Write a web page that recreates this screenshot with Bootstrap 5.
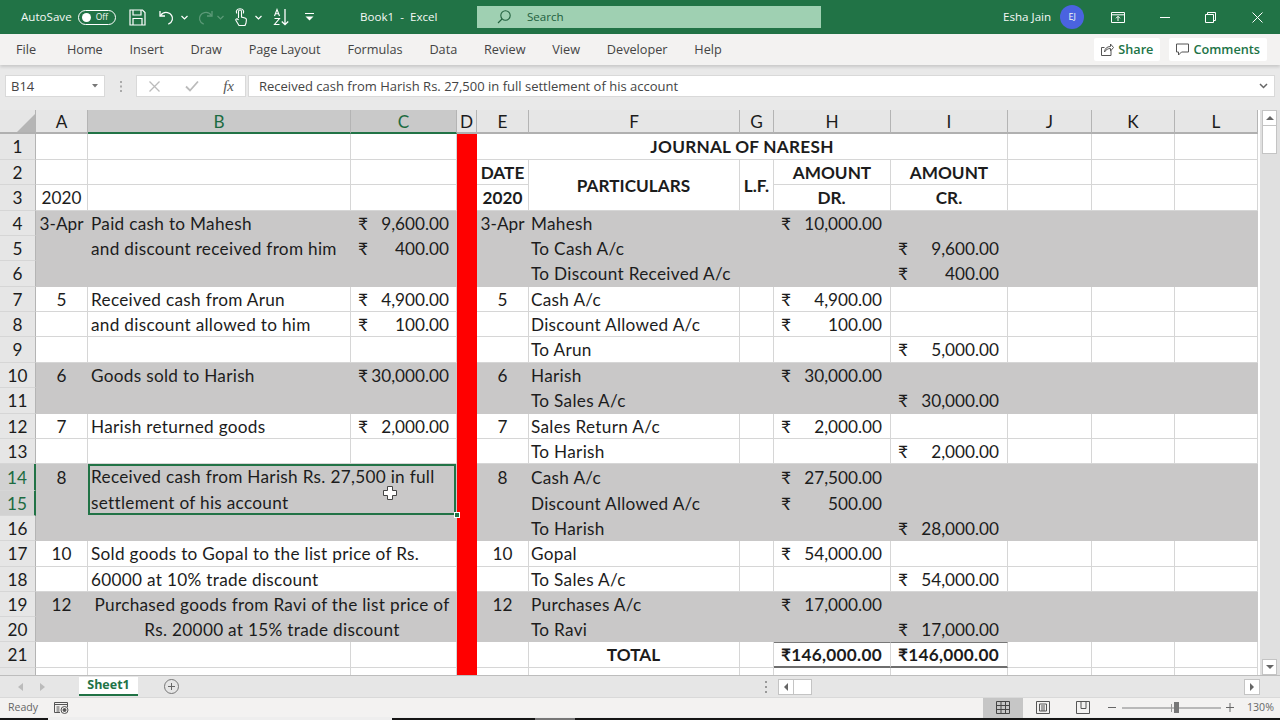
<!DOCTYPE html>
<html lang="en">
<head>
  <meta charset="UTF-8">
  <meta name="viewport" content="width=device-width, initial-scale=1.0">
  <title>Book1 - Excel</title>
  <link href="https://cdn.jsdelivr.net/npm/bootstrap@5.3.0/dist/css/bootstrap.min.css" rel="stylesheet">
  <style>
    html, body { height: 720px; overflow: hidden; }
    body { font-family: "Open Sans", "Noto Sans", sans-serif; background: #f3f2f1; color: #333; }
    svg { display: block; flex: none; }

    /* title bar */
    .title-strip { height: 34px; background: #217346; color: #f4f8f5; font-size: 11.6px; }
    .qat { width: 470px; padding-left: 21px; }
    .onoff { width: 38px; height: 15px; border: 1px solid #fff; border-radius: 8px; margin-left: 6px; padding: 0 3px; font-size: 8.5px; gap: 5px; }
    .onoff i { width: 9px; height: 9px; border-radius: 50%; background: #fff; display: block; }
    .doc-name { width: 117px; margin-left: -110px; }
    .search-box { width: 344px; height: 22px; background: #9fd0b2; color: #22603e; padding-left: 20px; gap: 16px; margin-top: -1px; }
    .user-name { margin-left: 182px; }
    .avatar { width: 24px; height: 24px; border-radius: 50%; background: #4a63e0; font-size: 9px; margin-left: 9px; margin-right: 27px; }

    /* ribbon tabs */
    .tab-strip { height: 31px; padding-left: 16px; font-size: 12.7px; color: #444; gap: 26.8px; box-shadow: 0 2px 3px rgba(0,0,0,.14); position: relative; z-index: 2; }
    .tab-file { margin-right: 4px; }
    .rbtn-group { gap: 9px; margin-right: 13px; }
    .rbtn { height: 23px; background: #fff; color: #217346; font-weight: 600; font-size: 12.7px; gap: 4px; padding: 0 7px; border-radius: 2px; }

    /* formula bar */
    .formula-strip { height: 45px; background: #e9e9e9; padding: 10px 5px 13px 5px; font-size: 13px; color: #444; }
    .fbox { background: #fff; border: 1px solid #d9d9d9; height: 22px; }
    .fbox span { padding-top: 1px; }
    .name-box { width: 100px; padding: 0 6px 0 5px; }
    .fdots { width: 31px; }
    .fx-box { width: 110px; margin-right: 2px; padding: 0 11px; }
    .fx-box em { font-family: "Liberation Serif", serif; font-size: 15px; color: #555; }
    .input-box { flex: 1; padding: 0 6px 0 10px; }

    /* sheet */
    .sheet-wrap { height: 565px; background: #e0e0e0; }
    .sheet-view { width: 1260px; height: 565px; overflow: hidden; position: relative; background: #fff; }
    .sheet-grid { width: 1258px; table-layout: fixed; border-collapse: separate; border-spacing: 0; font-family: Lato, "Noto Sans", sans-serif; font-size: 17.2px; color: #1c1c1c; background: #fff; }
    .sheet-grid td, .sheet-grid th { height: 25px; padding: 1px 3px 0; border-right: 1px solid #d6d6d6; border-bottom: 1px solid #d6d6d6; line-height: 1; white-space: nowrap; font-weight: 400; overflow: hidden; letter-spacing: .3px; }
    .sheet-grid tr.tall td, .sheet-grid tr.tall th { height: 26px; }
    .sheet-grid th { letter-spacing: 0; }
    .sheet-grid .hcol th { height: 24px; padding-top: 1px; background: #e6e6e6; text-align: center; border-right-color: #b4b4b4; border-bottom: 2px solid #b0b0b0; }
    .sheet-grid .hcol .sel-h { background: #c9c9c9; color: #1c6b41; border-bottom-color: #217346; }
    .sheet-grid .hrow { background: #e6e6e6; text-align: center; border-right-color: #b4b4b4; }
    .sheet-grid .sel-r { background: #d2d2d2; color: #1c6b41; border-right: 2px solid #217346; }
    .corner-tri { width: 0; height: 0; border-style: solid; border-width: 0 0 18px 18px; border-color: transparent transparent #b5b5b5 transparent; margin: 3px 0 0 14px; }
    .sheet-grid td.ctr { text-align: center; letter-spacing: 0; }
    .sheet-grid td.ctr-w { text-align: center; }
    .sheet-grid td.ctr-b { text-align: center; font-weight: 700; letter-spacing: 0; }
    .sheet-grid td.sheet-title { letter-spacing: .25px; }
    .sheet-grid td.amt { padding-left: 7px; padding-right: 8px; letter-spacing: 0; }
    .sheet-grid td.amt:nth-child(4) { padding-right: 7px; }
    .sheet-grid td.amt > div { display: flex; justify-content: space-between; }
    .sheet-grid .red-col + td + td { padding-left: 2px; }
    .sheet-grid tr.gy td:not(.red-col) { background: #c9c8c8; border-color: #c9c8c8; }
    .sheet-grid td.red-col { background: #f00; border-color: #f00; }
    .sheet-grid td.tot { font-weight: 700; letter-spacing: .3px; border-top: 1px solid #777; border-bottom: 2px solid #6e6e6e; }
    .sheet-grid td.tot > div { justify-content: flex-end; }
    .sheet-grid tr.last-row td, .sheet-grid tr.last-row th { height: 10px; padding: 0; }
    .sheet-grid td.sel-cell { vertical-align: top; padding-top: 0; line-height: 25.5px; white-space: normal; box-shadow: inset 0 0 0 2px #217346; overflow: visible; }
    .fill-handle { position: absolute; left: 454px; top: 402px; width: 4px; height: 4px; background: #217346; border: 1px solid #fff; box-sizing: content-box; }
    .cell-cursor { position: absolute; left: 382px; top: 375px; }

    /* scrollbars */
    .vscroll { width: 20px; padding: 0 3px 0 2px; }
    .sbtn { background: #fff; border: 1px solid #c4c4c4; }
    .vscroll .sbtn { width: 15px; height: 16px; }
    .vthumb { width: 15px; height: 28px; background: #fff; border: 1px solid #c4c4c4; border-top: 0; }

    /* sheet tabs */
    .sheet-tabs { height: 22px; background: #e6e6e6; border-top: 1px solid #bdbdbd; }
    .tab-nav { width: 79px; padding-left: 18px; gap: 17px; }
    .sheet1 { width: 59px; height: 19px; background: #fff; color: #217346; font-weight: 700; font-size: 12.5px; border-bottom: 2px solid #217346; margin-top: -1px; }
    .add-sheet { width: 15px; height: 15px; border: 1px solid #777; border-radius: 50%; margin-left: 26px; }
    .hscroll { margin-left: auto; padding-right: 20px; }
    .hdots { margin-right: 11px; }
    .hscroll .sbtn { height: 16px; width: 16px; }
    .hthumb { width: 18px; height: 16px; background: #fff; border: 1px solid #c4c4c4; border-left: 0; }
    .htrack { width: 432px; }

    /* status bar */
    .status-strip { height: 20px; background: #f3f2f1; border-top: 1px solid #d9d9d9; font-size: 10.6px; color: #666; padding-left: 8px; }
    .view-btn { width: 40px; height: 20px; }
    .view-on { background: #c6c6c6; }
    .zoom-minus { margin-left: 5px; }
    .zoom-track { width: 99px; height: 2px; background: #b9b9b9; position: relative; margin: 0 5px 0 6px; }
    .zoom-thumb { position: absolute; left: 52px; top: -5px; width: 5px; height: 11px; background: #777; }
    .zoom-tick { position: absolute; left: 49px; top: -3px; width: 1px; height: 8px; background: #999; }
    .zoom-pct { width: 46px; padding-left: 13px; }
    .bottom-edge { height: 3px; background: #eee; }
    .bottom-edge i { display: block; height: 2px; margin-top: 1px; background: #151515; }
  </style>
</head>
<body>

  <!-- title bar -->
  <div class="title-strip d-flex align-items-center">
    <div class="qat d-flex align-items-center">
      <span>AutoSave</span>
      <div class="onoff d-flex align-items-center"><i></i><span>Off</span></div>
      <svg style="margin-left:13px" width="17" height="17" viewBox="0 0 17 17" fill="none" stroke="#fff" stroke-width="1.2"><path d="M1 1h12.500L16 3.500V16H1z"/><path d="M4 1v5h8V1M4 16V9.500h9V16"/></svg>
      <svg style="margin-left:13px" width="16" height="15" viewBox="0 0 16 15" fill="none" stroke="#fff" stroke-width="1.3"><path d="M1 1v5h5"/><path d="M1.300 5.800C3 3.200 5.600 2 8.500 2.600c3.500.7 5.700 4 4.800 7.300-.5 2-2 3.500-4 4.300"/></svg>
      <svg style="margin-left:6px" width="7" height="5" viewBox="0 0 7 5" fill="none" stroke="#fff" stroke-width="1.2"><path d="M.5 1 3.500 4l3-3"/></svg>
      <svg style="margin-left:9px" width="16" height="15" viewBox="0 0 16 15" fill="none" stroke="#5c9a78" stroke-width="1.3"><path d="M15 1v5h-5"/><path d="M14.700 5.800C13 3.200 10.400 2 7.500 2.600c-3.500.7-5.700 4-4.800 7.300.5 2 2 3.500 4 4.300"/></svg>
      <svg style="margin-left:4px" width="7" height="5" viewBox="0 0 7 5" fill="none" stroke="#5c9a78" stroke-width="1.2"><path d="M.5 1 3.500 4l3-3"/></svg>
      <svg style="margin-left:10px" width="13" height="18" viewBox="0 0 13 18" fill="none" stroke="#fff" stroke-width="1.1"><path d="M4.500 10V3.500a1.500 1.500 0 0 1 3 0V9l3.500 1c1 .3 1.500 1 1.400 2l-.4 3-1 2.500H5L2 12.500c-.6-1 .5-2.200 1.500-1.500l1 1"/><path d="M2.800 5.500C1.500 3.200 3 .8 6 .8s4.500 2.400 3.200 4.700"/></svg>
      <svg style="margin-left:8px" width="7" height="5" viewBox="0 0 7 5" fill="none" stroke="#fff" stroke-width="1.2"><path d="M.5 1 3.500 4l3-3"/></svg>
      <svg style="margin-left:11px" width="17" height="18" viewBox="0 0 17 18" fill="none" stroke="#fff" stroke-width="1.100"><path d="M1.500 8 4 1.500 6.500 8M2.400 5.800h3.200M1.500 10.500h5L1.500 16.500h5"/><path d="M12 1v15.500M8.800 13.500l3.200 3.200 3.200-3.200" stroke-width="1.300"/></svg>
      <svg style="margin-left:15px" width="9" height="8" viewBox="0 0 9 8" fill="#fff"><path d="M0 0h9v1.100H0zM.5 3.500h8L4.500 7.500z"/></svg>
    </div>
    <div class="doc-name text-nowrap">Book1&nbsp; -&nbsp; Excel</div>
    <div class="search-box d-flex align-items-center">
      <svg width="14" height="14" viewBox="0 0 14 14" fill="none" stroke="#22603e" stroke-width="1.100"><circle cx="8.500" cy="5.500" r="4.700"/><path d="M5 9 1 13"/></svg>
      <span>Search</span>
    </div>
    <span class="user-name">Esha Jain</span>
    <div class="avatar d-flex align-items-center justify-content-center">EJ</div>
    <svg width="14" height="11" viewBox="0 0 14 11" fill="none" stroke="#fff" stroke-width="1"><path d="M.5.500h13v10H.5zM.5 2.800h13"/><path d="M7 9V4.500M5 6.300l2-2 2 2"/></svg>
    <svg style="margin-left:35px" width="10" height="1"><rect width="10" height="1" fill="#fff"/></svg>
    <svg style="margin-left:35px" width="11" height="11" viewBox="0 0 11 11" fill="none" stroke="#fff" stroke-width="1"><path d="M.5 2.500h8v8h-8zM2.500 2.500v-2h8v8h-2"/></svg>
    <svg style="margin-left:36px" width="11" height="11" viewBox="0 0 11 11" fill="none" stroke="#fff" stroke-width="1"><path d="M.5.500l10 10M10.500.500l-10 10"/></svg>
  </div>

  <!-- ribbon tabs -->
  <div class="tab-strip d-flex align-items-center">
    <span class="tab-file">File</span><span>Home</span><span>Insert</span><span>Draw</span><span>Page Layout</span><span>Formulas</span><span>Data</span><span>Review</span><span>View</span><span>Developer</span><span>Help</span>
    <div class="rbtn-group ms-auto d-flex align-items-center">
      <div class="rbtn d-flex align-items-center">
        <svg width="13" height="13" viewBox="0 0 13 13" fill="none" stroke="#555" stroke-width="1"><path d="M10 7.500v5H.5v-8h3"/><path d="M3.500 9c.3-3.500 2.500-5.500 6-5.500V1l3 3.500-3 3.500V5.500C7 5.500 5 6.500 3.500 9z"/></svg>
        <span>Share</span>
      </div>
      <div class="rbtn d-flex align-items-center">
        <svg width="13" height="13" viewBox="0 0 13 13" fill="none" stroke="#555" stroke-width="1"><path d="M.5 1h12v8h-7l-3 3V9h-2z"/></svg>
        <span>Comments</span>
      </div>
    </div>
  </div>

  <!-- formula bar -->
  <div class="formula-strip d-flex">
    <div class="fbox name-box d-flex align-items-center justify-content-between">
      <span>B14</span>
      <svg width="6" height="4" viewBox="0 0 6 4" fill="#777"><path d="M0 0h6L3 3.500z"/></svg>
    </div>
    <div class="fdots d-flex align-items-center justify-content-center">
      <svg width="2" height="11" viewBox="0 0 2 11" fill="#aaa"><rect width="2" height="2"/><rect y="4.500" width="2" height="2"/><rect y="9" width="2" height="2"/></svg>
    </div>
    <div class="fbox fx-box d-flex align-items-center justify-content-between">
      <svg width="13" height="13" viewBox="0 0 13 13" fill="none" stroke="#bbb" stroke-width="1.300"><path d="M1.500 1.500l10 10M11.500 1.500l-10 10"/></svg>
      <svg width="14" height="12" viewBox="0 0 14 12" fill="none" stroke="#bbb" stroke-width="1.800"><path d="M1 6.500l4 4 8-9"/></svg>
      <em>fx</em>
    </div>
    <div class="fbox input-box d-flex align-items-center justify-content-between">
      <span>Received cash from Harish Rs. 27,500 in full settlement of his account</span>
      <svg width="9" height="6" viewBox="0 0 9 6" fill="none" stroke="#666" stroke-width="1.500"><path d="M1 1l3.500 3.500L8 1"/></svg>
    </div>
  </div>

  <!-- sheet -->
  <div class="sheet-wrap d-flex">
    <div class="sheet-view">
      <table class="sheet-grid">
        <colgroup>
          <col style="width:36px"><col style="width:52px"><col style="width:263px"><col style="width:106px"><col style="width:20px"><col style="width:52px"><col style="width:211px"><col style="width:34px"><col style="width:117px"><col style="width:117px"><col style="width:84px"><col style="width:83px"><col style="width:83px">
        </colgroup>
        <tr class="hcol"><th><div class="corner-tri"></div></th><th>A</th><th class="sel-h">B</th><th class="sel-h">C</th><th>D</th><th>E</th><th>F</th><th>G</th><th>H</th><th>I</th><th>J</th><th>K</th><th>L</th></tr>
        <tr class="tall"><th class="hrow">1</th><td></td><td></td><td></td><td class="red-col"></td><td class="ctr-b sheet-title" colspan="5">JOURNAL OF NARESH</td><td></td><td></td><td></td></tr>
        <tr><th class="hrow">2</th><td></td><td></td><td></td><td class="red-col"></td><td class="ctr-b">DATE</td><td class="ctr-b" rowspan="2">PARTICULARS</td><td class="ctr-b" rowspan="2">L.F.</td><td class="ctr-b">AMOUNT</td><td class="ctr-b">AMOUNT</td><td></td><td></td><td></td></tr>
        <tr class="tall"><th class="hrow">3</th><td class="ctr">2020</td><td></td><td></td><td class="red-col"></td><td class="ctr-b">2020</td><td class="ctr-b">DR.</td><td class="ctr-b">CR.</td><td></td><td></td><td></td></tr>
        <tr class="gy"><th class="hrow">4</th><td class="ctr">3-Apr</td><td>Paid cash to Mahesh</td><td class="amt"><div><span>₹</span><span>9,600.00</span></div></td><td class="red-col"></td><td class="ctr">3-Apr</td><td>Mahesh</td><td></td><td class="amt"><div><span>₹</span><span>10,000.00</span></div></td><td></td><td></td><td></td><td></td></tr>
        <tr class="gy"><th class="hrow">5</th><td></td><td>and discount received from him</td><td class="amt"><div><span>₹</span><span>400.00</span></div></td><td class="red-col"></td><td></td><td>To Cash A/c</td><td></td><td></td><td class="amt"><div><span>₹</span><span>9,600.00</span></div></td><td></td><td></td><td></td></tr>
        <tr class="gy tall"><th class="hrow">6</th><td></td><td></td><td></td><td class="red-col"></td><td></td><td>To Discount Received A/c</td><td></td><td></td><td class="amt"><div><span>₹</span><span>400.00</span></div></td><td></td><td></td><td></td></tr>
        <tr><th class="hrow">7</th><td class="ctr">5</td><td>Received cash from Arun</td><td class="amt"><div><span>₹</span><span>4,900.00</span></div></td><td class="red-col"></td><td class="ctr">5</td><td>Cash A/c</td><td></td><td class="amt"><div><span>₹</span><span>4,900.00</span></div></td><td></td><td></td><td></td><td></td></tr>
        <tr><th class="hrow">8</th><td></td><td>and discount allowed to him</td><td class="amt"><div><span>₹</span><span>100.00</span></div></td><td class="red-col"></td><td></td><td>Discount Allowed A/c</td><td></td><td class="amt"><div><span>₹</span><span>100.00</span></div></td><td></td><td></td><td></td><td></td></tr>
        <tr class="tall"><th class="hrow">9</th><td></td><td></td><td></td><td class="red-col"></td><td></td><td>To Arun</td><td></td><td></td><td class="amt"><div><span>₹</span><span>5,000.00</span></div></td><td></td><td></td><td></td></tr>
        <tr class="gy"><th class="hrow">10</th><td class="ctr">6</td><td>Goods sold to Harish</td><td class="amt"><div><span>₹</span><span>30,000.00</span></div></td><td class="red-col"></td><td class="ctr">6</td><td>Harish</td><td></td><td class="amt"><div><span>₹</span><span>30,000.00</span></div></td><td></td><td></td><td></td><td></td></tr>
        <tr class="gy tall"><th class="hrow">11</th><td></td><td></td><td></td><td class="red-col"></td><td></td><td>To Sales A/c</td><td></td><td></td><td class="amt"><div><span>₹</span><span>30,000.00</span></div></td><td></td><td></td><td></td></tr>
        <tr><th class="hrow">12</th><td class="ctr">7</td><td>Harish returned goods</td><td class="amt"><div><span>₹</span><span>2,000.00</span></div></td><td class="red-col"></td><td class="ctr">7</td><td>Sales Return A/c</td><td></td><td class="amt"><div><span>₹</span><span>2,000.00</span></div></td><td></td><td></td><td></td><td></td></tr>
        <tr><th class="hrow">13</th><td></td><td></td><td></td><td class="red-col"></td><td></td><td>To Harish</td><td></td><td></td><td class="amt"><div><span>₹</span><span>2,000.00</span></div></td><td></td><td></td><td></td></tr>
        <tr class="gy tall"><th class="hrow sel-r">14</th><td class="ctr">8</td><td class="sel-cell" colspan="2" rowspan="2">Received cash from Harish Rs. 27,500 in full<br>settlement of his account</td><td class="red-col"></td><td class="ctr">8</td><td>Cash A/c</td><td></td><td class="amt"><div><span>₹</span><span>27,500.00</span></div></td><td></td><td></td><td></td><td></td></tr>
        <tr class="gy"><th class="hrow sel-r">15</th><td></td><td class="red-col"></td><td></td><td>Discount Allowed A/c</td><td></td><td class="amt"><div><span>₹</span><span>500.00</span></div></td><td></td><td></td><td></td><td></td></tr>
        <tr class="gy"><th class="hrow">16</th><td></td><td></td><td></td><td class="red-col"></td><td></td><td>To Harish</td><td></td><td></td><td class="amt"><div><span>₹</span><span>28,000.00</span></div></td><td></td><td></td><td></td></tr>
        <tr class="tall"><th class="hrow">17</th><td class="ctr">10</td><td colspan="2">Sold goods to Gopal to the list price of Rs.</td><td class="red-col"></td><td class="ctr">10</td><td>Gopal</td><td></td><td class="amt"><div><span>₹</span><span>54,000.00</span></div></td><td></td><td></td><td></td><td></td></tr>
        <tr><th class="hrow">18</th><td></td><td colspan="2">60000 at 10% trade discount</td><td class="red-col"></td><td></td><td>To Sales A/c</td><td></td><td></td><td class="amt"><div><span>₹</span><span>54,000.00</span></div></td><td></td><td></td><td></td></tr>
        <tr class="gy"><th class="hrow">19</th><td class="ctr">12</td><td class="ctr-w" colspan="2">Purchased goods from Ravi of the list price of</td><td class="red-col"></td><td class="ctr">12</td><td>Purchases A/c</td><td></td><td class="amt"><div><span>₹</span><span>17,000.00</span></div></td><td></td><td></td><td></td><td></td></tr>
        <tr class="gy"><th class="hrow">20</th><td></td><td class="ctr-w" colspan="2">Rs. 20000 at 15% trade discount</td><td class="red-col"></td><td></td><td>To Ravi</td><td></td><td></td><td class="amt"><div><span>₹</span><span>17,000.00</span></div></td><td></td><td></td><td></td></tr>
        <tr class="tall"><th class="hrow">21</th><td></td><td></td><td></td><td class="red-col"></td><td></td><td class="ctr-b">TOTAL</td><td></td><td class="amt tot"><div><span>₹146,000.00</span></div></td><td class="amt tot"><div><span>₹146,000.00</span></div></td><td></td><td></td><td></td></tr>
        <tr class="last-row"><th class="hrow"></th><td></td><td></td><td></td><td class="red-col"></td><td></td><td></td><td></td><td></td><td></td><td></td><td></td><td></td></tr>
      </table>
      <div class="fill-handle"></div>
      <svg class="cell-cursor" width="16" height="16" viewBox="0 0 16 16" fill="#fff" stroke="#444" stroke-width="1"><path d="M5.500 1.500h5v4h4v5h-4v4h-5v-4h-4v-5h4z"/></svg>
    </div>
    <div class="vscroll d-flex flex-column">
      <div class="sbtn d-flex align-items-center justify-content-center"><svg width="8" height="4" viewBox="0 0 8 4" fill="#666"><path d="M4 0l4 4H0z"/></svg></div>
      <div class="vthumb"></div>
      <div class="sbtn d-flex align-items-center justify-content-center mt-auto"><svg width="8" height="4" viewBox="0 0 8 4" fill="#666"><path d="M0 0h8L4 4z"/></svg></div>
    </div>
  </div>

  <!-- sheet tabs -->
  <div class="sheet-tabs d-flex align-items-center">
    <div class="tab-nav d-flex align-items-center">
      <svg width="5" height="8" viewBox="0 0 5 8" fill="#bbb"><path d="M5 0v8L0 4z"/></svg>
      <svg width="5" height="8" viewBox="0 0 5 8" fill="#bbb"><path d="M0 0v8l5-4z"/></svg>
    </div>
    <div class="sheet1 d-flex align-items-center justify-content-center">Sheet1</div>
    <div class="add-sheet d-flex align-items-center justify-content-center"><svg width="7" height="7" viewBox="0 0 7 7" stroke="#666" stroke-width="1"><path d="M3.500 0v7M0 3.500h7"/></svg></div>
    <div class="hscroll d-flex align-items-center">
      <svg class="hdots" width="2" height="12" viewBox="0 0 2 12" fill="#999"><rect width="2" height="2"/><rect y="5" width="2" height="2"/><rect y="10" width="2" height="2"/></svg>
      <div class="sbtn d-flex align-items-center justify-content-center"><svg width="4" height="8" viewBox="0 0 4 8" fill="#666"><path d="M4 0v8L0 4z"/></svg></div>
      <div class="hthumb"></div>
      <div class="htrack"></div>
      <div class="sbtn d-flex align-items-center justify-content-center"><svg width="4" height="8" viewBox="0 0 4 8" fill="#666"><path d="M0 0v8l4-4z"/></svg></div>
    </div>
  </div>

  <!-- status bar -->
  <div class="status-strip d-flex align-items-center">
    <span>Ready</span>
    <svg style="margin-left:16px" width="15" height="13" viewBox="0 0 15 13" fill="none" stroke="#555" stroke-width="1"><path d="M.5 1.500h13V6M.5 1.500v10H6M.5 3.500h13M2.500 6h3M2.500 8h3M2.500 10h3"/><circle cx="10.500" cy="9" r="3.500"/><circle cx="10.500" cy="9" r="1.500" fill="#555"/></svg>
    <div class="ms-auto d-flex align-items-center">
      <div class="view-btn view-on d-flex align-items-center justify-content-center"><svg width="14" height="13" viewBox="0 0 14 13" fill="none" stroke="#444" stroke-width="1"><path d="M.5.500h13v12H.5zM.5 4.500h13M.5 8.500h13M5 .5v12M9.500.5v12"/></svg></div>
      <div class="view-btn d-flex align-items-center justify-content-center"><svg width="14" height="13" viewBox="0 0 14 13" fill="none" stroke="#555" stroke-width="1"><path d="M.5.500h13v12H.5zM3.500 3h7v7h-7zM5 5h4M5 7h4M5 9h4"/></svg></div>
      <div class="view-btn d-flex align-items-center justify-content-center"><svg width="14" height="13" viewBox="0 0 14 13" fill="none" stroke="#555" stroke-width="1"><path d="M.5.500h13v12H.5zM5 .5v7h5V.500"/></svg></div>
      <svg class="zoom-minus" width="8" height="1"><rect width="8" height="1" fill="#666"/></svg>
      <div class="zoom-track"><div class="zoom-tick"></div><div class="zoom-thumb"></div></div>
      <svg width="8" height="9" viewBox="0 0 8 9" stroke="#666" stroke-width="1"><path d="M4 0v9M0 4.500h8"/></svg>
      <span class="zoom-pct">130%</span>
    </div>
  </div>
  <div class="bottom-edge d-flex">
    <i style="width:48px"></i><i style="width:344px;background:#eee"></i><i style="width:143px"></i><i style="width:40px;background:#777"></i><i class="flex-fill"></i>
  </div>

  <script src="https://cdn.jsdelivr.net/npm/bootstrap@5.3.0/dist/js/bootstrap.bundle.min.js"></script>
</body>
</html>
